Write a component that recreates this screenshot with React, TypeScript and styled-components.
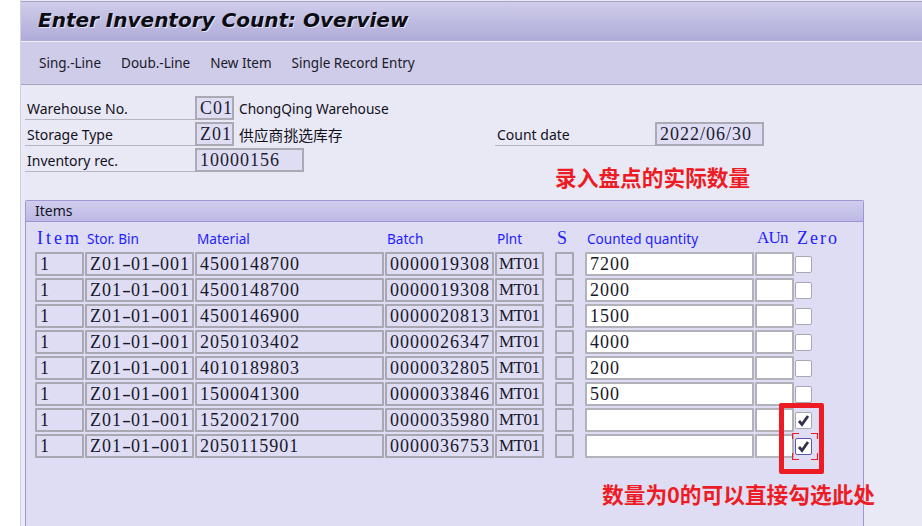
import React from "react";
import styled, { createGlobalStyle } from "styled-components";

const GlobalStyle = createGlobalStyle`
  html, body { margin: 0; padding: 0; background: #ffffff; }
  body { width: 922px; height: 526px; overflow: hidden; }
`;

const UI_FONT = `"Noto Sans", "Noto Sans CJK SC", sans-serif`;
const MONO_FONT = `"Liberation Serif", "Noto Sans CJK SC", serif`;

const Page = styled.div`
  position: relative;
  width: 922px;
  height: 526px;
  overflow: hidden;
  background: #ffffff;
  padding-left: 20px;
  box-sizing: border-box;
`;

const Main = styled.main`
  height: 526px;
  background: #e9e8f5;
  border-left: 1px solid #d3d2e4;
  display: flex;
  flex-direction: column;
`;

const TitleBar = styled.header`
  height: 40px;
  margin-top: 1px;
  border-top: 1px solid #a5a3c4;
  box-sizing: border-box;
  background: linear-gradient(#cfcdea, #afabd9);
  display: flex;
  align-items: center;
  padding: 0 0 3px 17px;
  font: italic 700 20px "DejaVu Sans", sans-serif;
  color: #0c0c14;
  text-shadow: 1px 1px 0 #e4e3f3;
`;

const Toolbar = styled.nav`
  height: 44px;
  border-top: 1px solid #f1f0fa;
  border-bottom: 1px solid #a6a5bf;
  box-sizing: border-box;
  background: #cecce8;
  display: flex;
  align-items: center;
  gap: 20px;
  padding-left: 18px;
`;

const ToolItem = styled.span`
  font: 13.5px ${UI_FONT};
  color: #1a1a28;
`;

const Form = styled.section`
  display: grid;
  grid-template-columns: 470px 269px;
  padding: 9px 0 0 4px;
  height: 116px;
  box-sizing: border-box;
  align-content: start;
`;

const FieldRow = styled.div`
  display: flex;
  align-items: flex-end;
  height: 26px;
`;

const Label = styled.span<{ $w: number }>`
  width: ${(p) => p.$w}px;
  height: 24px;
  padding-left: 2px;
  box-sizing: border-box;
  border-bottom: 1px solid #b6b5c0;
  font: 14px/25px ${UI_FONT};
  color: #12121c;
`;

const Display = styled.span<{ $w: number }>`
  width: ${(p) => p.$w}px;
  height: 24px;
  box-sizing: border-box;
  border: 2px solid #aaa9b4;
  background: #dfddf3;
  padding-left: 3px;
  font: 18px/20px ${MONO_FONT};
  letter-spacing: 1px;
  color: #1c1c30;
  white-space: nowrap;
`;

const Description = styled.span<{ $cjk?: boolean }>`
  margin-left: 5px;
  align-self: center;
  padding-top: 2px;
  font: ${(p) => (p.$cjk ? 14.8 : 13.7)}px ${UI_FONT};
  color: #12121c;
`;

const Empty = styled.div``;

const Panel = styled.section`
  margin-left: 4px;
  width: 839px;
  flex: 1;
  box-sizing: border-box;
  border: 1px solid #9d98d3;
  border-bottom: none;
  border-radius: 2px 2px 0 0;
  background: #dfddf3;
  margin-top: -1px;
`;

const PanelHead = styled.div`
  height: 20px;
  padding-left: 9px;
  border-bottom: 1px solid #9d98d3;
  background: linear-gradient(#d0cdee, #bdb9e4);
  font: 14px/20px ${UI_FONT};
  color: #12121c;
`;

const TableWrap = styled.div`
  padding: 6px 0 0 9px;
`;

const GridRow = styled.div<{ $head?: boolean }>`
  display: grid;
  grid-template-columns: 49px 109px 189px 109px 49px 29px 179px 39px 17px;
  column-gap: 1px;
  height: ${(p) => (p.$head ? 24 : 26)}px;
`;

const HeadText = styled.span<{ $offset?: number }>`
  padding-left: 2px;
  justify-self: ${(p) => (p.$offset ? "end" : "start")};
  width: ${(p) => (p.$offset ? `${p.$offset}px` : "auto")};
  box-sizing: border-box;
  color: #1e1eff;
  white-space: nowrap;
  font: 13.6px/22px ${UI_FONT};
`;

const HeadMono = styled(HeadText)<{ $size?: number; $spacing: number }>`
  font: ${(p) => p.$size ?? 18}px/20px ${MONO_FONT};
  letter-spacing: ${(p) => p.$spacing}px;
`;

const Cell = styled.div<{ $input?: boolean; $w?: number; $narrow?: boolean }>`
  height: 24px;
  box-sizing: border-box;
  justify-self: end;
  width: ${(p) => (p.$w ? `${p.$w}px` : "100%")};
  border: 2px solid ${(p) => (p.$input ? "#b3b2bb" : "#a9a8b2")};
  border-radius: 1px;
  background: ${(p) => (p.$input ? "#ffffff" : "#dfddf3")};
  padding-left: ${(p) => (p.$narrow ? 2 : 3)}px;
  font: ${(p) => (p.$narrow ? 17 : 18)}px/20px ${MONO_FONT};
  letter-spacing: ${(p) => (p.$narrow ? -0.5 : 1)}px;
  color: #17172a;
  white-space: nowrap;
  overflow: hidden;
`;

const Dash = styled.span`
  display: inline-block;
  width: 9px;
  text-align: center;
  letter-spacing: 0;
  transform: scaleX(1.5);
`;

const Check = styled.span<{ $focus?: boolean }>`
  width: 17px;
  height: 17px;
  margin-top: 4px;
  box-sizing: border-box;
  border: 1px solid ${(p) => (p.$focus ? "#5f55b0" : "#a9a8b2")};
  border-radius: 2px;
  background: #ffffff;
  display: flex;
  align-items: center;
  justify-content: center;
`;

const Note = styled.div<{ $x: number; $y: number }>`
  position: absolute;
  left: ${(p) => p.$x}px;
  top: ${(p) => p.$y}px;
  font: 700 21.7px/26px "Noto Sans CJK SC", sans-serif;
  color: #ed1c24;
  white-space: nowrap;
`;

const RedBox = styled.div`
  position: absolute;
  left: 779px;
  top: 403px;
  width: 45px;
  height: 71px;
  box-sizing: border-box;
  border: 5px solid #ed1c24;
  border-radius: 2px;
`;

const Brackets = styled.svg`
  position: absolute;
  left: 792px;
  top: 433px;
`;

const Tick = () => (
  <svg width="13" height="13" viewBox="0 0 13 13">
    <path d="M2 7 L5 10.5 L11 2" fill="none" stroke="#34304e" strokeWidth="2.8" />
  </svg>
);

const rows = [
  ["4500148700", "0000019308", "7200", false],
  ["4500148700", "0000019308", "2000", false],
  ["4500146900", "0000020813", "1500", false],
  ["2050103402", "0000026347", "4000", false],
  ["4010189803", "0000032805", "200", false],
  ["1500041300", "0000033846", "500", false],
  ["1520021700", "0000035980", "", true],
  ["2050115901", "0000036753", "", true],
] as const;

export default function App() {
  return (
    <Page>
      <GlobalStyle />
      <Main>
        <TitleBar>Enter Inventory Count: Overview</TitleBar>
        <Toolbar>
          <ToolItem>Sing.-Line</ToolItem>
          <ToolItem>Doub.-Line</ToolItem>
          <ToolItem>New Item</ToolItem>
          <ToolItem>Single Record Entry</ToolItem>
        </Toolbar>
        <Form>
          <FieldRow>
            <Label $w={170}>Warehouse No.</Label>
            <Display $w={39}>C01</Display>
            <Description>ChongQing Warehouse</Description>
          </FieldRow>
          <Empty />
          <FieldRow>
            <Label $w={170}>Storage Type</Label>
            <Display $w={39}>Z01</Display>
            <Description $cjk>供应商挑选库存</Description>
          </FieldRow>
          <FieldRow>
            <Label $w={160}>Count date</Label>
            <Display $w={109}>2022/06/30</Display>
          </FieldRow>
          <FieldRow>
            <Label $w={170}>Inventory rec.</Label>
            <Display $w={109}>10000156</Display>
          </FieldRow>
        </Form>
        <Panel>
          <PanelHead>Items</PanelHead>
          <TableWrap>
            <GridRow $head>
              <HeadMono $spacing={3}>Item</HeadMono>
              <HeadText>Stor. Bin</HeadText>
              <HeadText>Material</HeadText>
              <HeadText>Batch</HeadText>
              <HeadText>Plnt</HeadText>
              <HeadMono $spacing={1} $offset={19}>S</HeadMono>
              <HeadText $offset={169}>Counted quantity</HeadText>
              <HeadMono $spacing={-0.8} $size={17}>AUn</HeadMono>
              <HeadMono $spacing={2}>Zero</HeadMono>
            </GridRow>
            {rows.map(([material, batch, qty, checked], i) => (
              <GridRow key={i}>
                <Cell>1</Cell>
                <Cell>Z01<Dash>-</Dash>01<Dash>-</Dash>001</Cell>
                <Cell>{material}</Cell>
                <Cell>{batch}</Cell>
                <Cell $narrow>MT01</Cell>
                <Cell $w={19} />
                <Cell $input $w={169}>{qty}</Cell>
                <Cell $input />
                <Check $focus={i === 7}>{checked && <Tick />}</Check>
              </GridRow>
            ))}
          </TableWrap>
        </Panel>
      </Main>
      <Note $x={555} $y={164}>录入盘点的实际数量</Note>
      <Note $x={602} $y={481}>数量为0的可以直接勾选此处</Note>
      <RedBox />
      <Brackets width="26" height="27" viewBox="0 0 26 27">
        <path
          d="M0.5 6 V0.5 H7 M19 0.5 H25.5 V6 M0.5 20 V26.5 H7 M19 26.5 H25.5 V20"
          fill="none"
          stroke="#ed1c24"
          strokeWidth="1.2"
        />
      </Brackets>
    </Page>
  );
}
